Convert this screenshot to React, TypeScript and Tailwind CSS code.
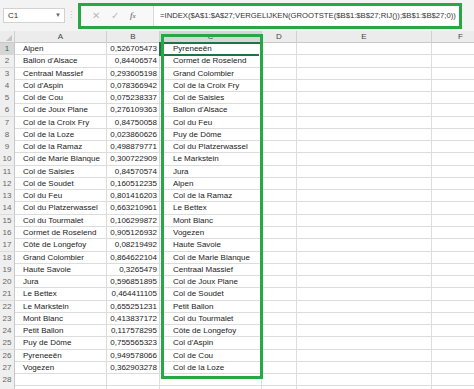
import React from "react";

const left = [
  ["Alpen", "0,526705473"],
  ["Ballon d'Alsace", "0,84406574"],
  ["Centraal Massief", "0,293605198"],
  ["Col d'Aspin", "0,078366942"],
  ["Col de Cou", "0,075238337"],
  ["Col de Joux Plane", "0,276109363"],
  ["Col de la Croix Fry", "0,84750058"],
  ["Col de la Loze", "0,023860626"],
  ["Col de la Ramaz", "0,498879771"],
  ["Col de Marie Blanque", "0,300722909"],
  ["Col de Saisies", "0,84570574"],
  ["Col de Soudet", "0,160512235"],
  ["Col du Feu", "0,801416203"],
  ["Col du Platzerwassel", "0,663210961"],
  ["Col du Tourmalet", "0,106299872"],
  ["Cormet de Roselend", "0,905126932"],
  ["Côte de Longefoy", "0,08219492"],
  ["Grand Colombier", "0,864622104"],
  ["Haute Savoie", "0,3265479"],
  ["Jura", "0,596851895"],
  ["Le Bettex", "0,464411105"],
  ["Le Markstein", "0,655251231"],
  ["Mont Blanc", "0,413837172"],
  ["Petit Ballon", "0,117578295"],
  ["Puy de Dôme", "0,755565323"],
  ["Pyreneeën", "0,949578066"],
  ["Vogezen", "0,362903278"],
];

const sorted = [
  "Pyreneeën",
  "Cormet de Roselend",
  "Grand Colombier",
  "Col de la Croix Fry",
  "Col de Saisies",
  "Ballon d'Alsace",
  "Col du Feu",
  "Puy de Dôme",
  "Col du Platzerwassel",
  "Le Markstein",
  "Jura",
  "Alpen",
  "Col de la Ramaz",
  "Le Bettex",
  "Mont Blanc",
  "Vogezen",
  "Haute Savoie",
  "Col de Marie Blanque",
  "Centraal Massief",
  "Col de Joux Plane",
  "Col de Soudet",
  "Petit Ballon",
  "Col du Tourmalet",
  "Côte de Longefoy",
  "Col d'Aspin",
  "Col de Cou",
  "Col de la Loze",
];

const cols = "grid grid-cols-[15px_92px_53px_102px_35px_135px_58px]";

export default function App() {
  const rows = Array.from({ length: 29 }, (_, i) => i);
  return (
    <div
      className="relative w-[474px] h-[389px] overflow-hidden bg-white text-[#1a1a1a] text-[8px]"
      style={{ fontFamily: "'Liberation Sans', Arial, sans-serif" }}
    >
      {/* formula bar */}
      <div className="flex items-center h-[31px] bg-[#f3f3f3]">
        <div className="ml-[3px] w-[62px] h-[15px] bg-white border border-[#d2d2d2] flex items-center justify-between pl-[4px] pr-[3px] text-[#333]">
          <span>C1</span>
          <span className="text-[6px] text-[#666]">▼</span>
        </div>
        <div className="w-[13px] flex justify-center text-[#c0c0c0] text-[9px]">⋮</div>
        <div className="w-[384px] h-[26px] border-[3px] border-[#27a844] flex bg-white">
          <div className="w-[72px] flex items-center bg-[#f8f8f8] text-[#b9b9b9]">
            <span className="ml-[11px] text-[10px]">✕</span>
            <span className="ml-[11px] text-[10px]">✓</span>
            <span
              className="ml-[11px] text-[#555] italic text-[9px]"
              style={{ fontFamily: "'Liberation Serif', serif" }}
            >
              f<span className="text-[7px]">x</span>
            </span>
          </div>
          <div className="flex-1 border-l border-[#d6d6d6] flex items-center pl-[6px] whitespace-nowrap overflow-hidden text-[#333] text-[7.7px]">
            =INDEX($A$1:$A$27;VERGELIJKEN(GROOTSTE($B$1:$B$27;RIJ());$B$1:$B$27;0))
          </div>
        </div>
      </div>

      {/* header row */}
      <div className={`${cols} h-[12px] bg-[#ececec] border-b border-[#c8c8c8] text-[#444]`}>
        <div className="relative border-r border-[#d0d0d0]">
          <div className="absolute right-[2px] bottom-[2px] w-0 h-0 border-l-[6px] border-l-transparent border-b-[6px] border-b-[#c4c4c4]" />
        </div>
        <div className="flex items-center justify-center border-r border-[#d0d0d0]">A</div>
        <div className="flex items-center justify-center border-r border-[#d0d0d0]">B</div>
        <div className="flex items-center justify-center border-r border-[#d0d0d0] bg-[#d6d6d6] text-[#217346]">C</div>
        <div className="flex items-center justify-center border-r border-[#d0d0d0]">D</div>
        <div className="flex items-center justify-center border-r border-[#d0d0d0]">E</div>
        <div className="flex items-center justify-center border-r border-[#d0d0d0]">F</div>
      </div>

      {/* rows */}
      {rows.map((i) => {
        const l = left[i];
        return (
          <div key={i} className={`${cols} h-[12.27px] border-b border-[#dcdcdc]`}>
            <div
              className={`flex items-center justify-center border-r border-[#c8c8c8] ${
                i === 0 ? "bg-[#d6d6d6] text-[#217346]" : "bg-[#efefef] text-[#666]"
              }`}
            >
              {i < 28 ? i + 1 : ""}
            </div>
            <div className="flex items-center pl-[8px] border-r border-[#dcdcdc] whitespace-nowrap overflow-hidden">
              {l ? l[0] : ""}
            </div>
            <div className="flex items-center justify-end pr-[2px] border-r border-[#dcdcdc] whitespace-nowrap">
              {l ? l[1] : ""}
            </div>
            <div className="relative flex items-center pl-[13px] border-r border-[#dcdcdc] whitespace-nowrap">
              {sorted[i] ?? ""}
              {i === 0 && (
                <>
                  <div className="absolute inset-[-1px] border-2 border-[#217346]" />
                  <div className="absolute right-[-3px] bottom-[-3px] w-[5px] h-[5px] bg-[#217346] border border-white" />
                </>
              )}
            </div>
            <div className="border-r border-[#dcdcdc]" />
            <div className="border-r border-[#dcdcdc]" />
            <div className="border-r border-[#dcdcdc]" />
          </div>
        );
      })}

      {/* green highlight around column C */}
      <div className="absolute left-[161px] top-[34px] w-[102px] h-[345px] border-[3px] border-[#27a844]" />
    </div>
  );
}
